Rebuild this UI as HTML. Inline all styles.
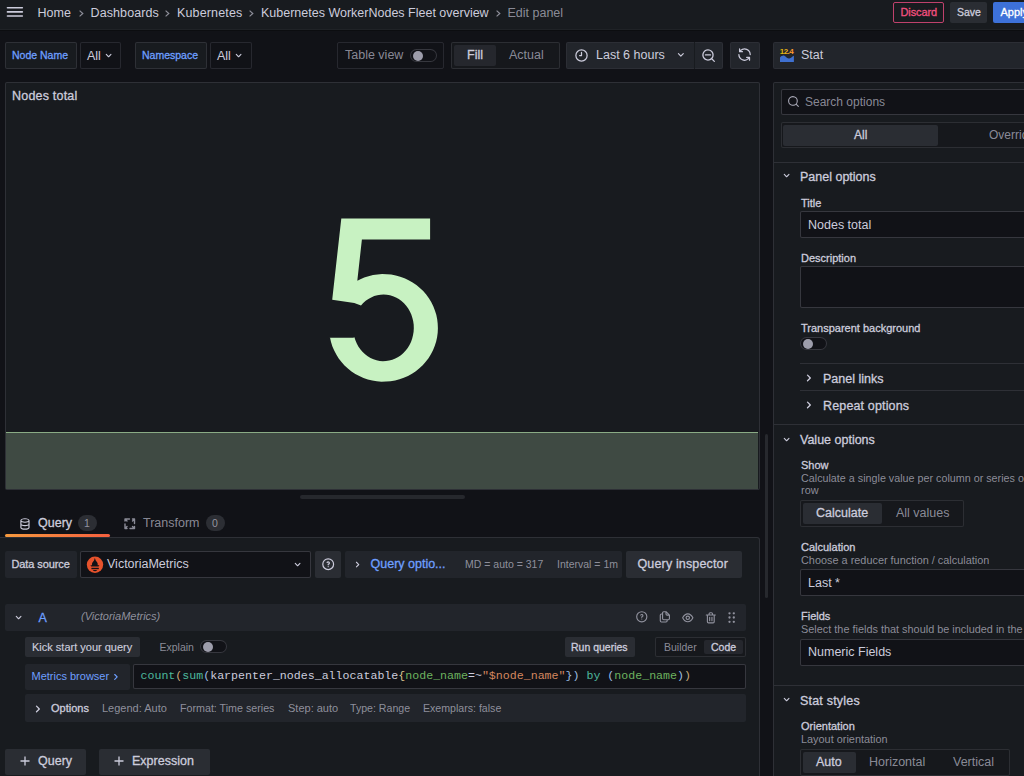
<!DOCTYPE html>
<html><head><meta charset="utf-8">
<style>
*{box-sizing:border-box;margin:0;padding:0}
html,body{width:1024px;height:776px;overflow:hidden;background:#111217;font-family:"Liberation Sans",sans-serif;color:#ccccdc}
.a{position:absolute}
.t{position:absolute;white-space:nowrap;line-height:1}
.bw{border:1px solid rgba(204,204,220,0.12)}
.bg2{border:1px solid rgba(204,204,220,0.16)}
.bm{border:1px solid rgba(204,204,220,0.2)}
.r2{border-radius:2px}
.sec{color:rgba(204,204,220,0.65)}
.link{color:#6e9fff}
.m{-webkit-text-stroke:0.3px currentColor}
.btn2{background:#2a2d33;border-radius:2px}
svg{position:absolute;overflow:visible}
</style></head><body>

<!-- TOP BAR -->
<div class="a" style="left:0;top:0;width:1024px;height:30px;background:#181b1f;border-bottom:1px solid rgba(204,204,220,0.045)"></div>
<svg style="left:5.05px;top:2.3px" width="19.80" height="19.80" viewBox="0 0 24 24"><path d="M3,8H21a1,1,0,0,0,0-2H3A1,1,0,0,0,3,8Zm18,8H3a1,1,0,0,0,0,2H21a1,1,0,0,0,0-2Zm0-5H3a1,1,0,0,0,0,2H21a1,1,0,0,0,0-2Z" fill="#ccccdc"/></svg>
<div class="t" style="left:37.5px;top:6.5px;font-size:12.5px">Home</div><svg style="left:79px;top:10px" width="5" height="7"><path d="M0.6 0.6 L3.8 3.5 L0.6 6.4" stroke="rgba(204,204,220,0.65)" stroke-width="1.2" fill="none"/></svg><div class="t" style="left:90.5px;top:6.5px;font-size:12.5px;letter-spacing:0.1px">Dashboards</div><svg style="left:165px;top:10px" width="5" height="7"><path d="M0.6 0.6 L3.8 3.5 L0.6 6.4" stroke="rgba(204,204,220,0.65)" stroke-width="1.2" fill="none"/></svg><div class="t" style="left:177px;top:6.5px;font-size:12.5px;letter-spacing:0.15px">Kubernetes</div><svg style="left:249px;top:10px" width="5" height="7"><path d="M0.6 0.6 L3.8 3.5 L0.6 6.4" stroke="rgba(204,204,220,0.65)" stroke-width="1.2" fill="none"/></svg><div class="t" style="left:261px;top:6.5px;font-size:12.5px">Kubernetes WorkerNodes Fleet overview</div><svg style="left:495.5px;top:10px" width="5" height="7"><path d="M0.6 0.6 L3.8 3.5 L0.6 6.4" stroke="rgba(204,204,220,0.65)" stroke-width="1.2" fill="none"/></svg><div class="t sec" style="left:507.5px;top:6.5px;font-size:12.5px">Edit panel</div>

<div class="a r2" style="left:893px;top:2px;width:51px;height:21px;border:1px solid #bf416c"></div>
<div class="t m" style="left:900.5px;top:7px;font-size:11px;color:#f2507f;letter-spacing:-0.1px">Discard</div>
<div class="a btn2" style="left:950px;top:2px;width:37px;height:21px"></div>
<div class="t m" style="left:957px;top:7px;font-size:10.5px">Save</div>
<div class="a r2" style="left:993px;top:2px;width:40px;height:21px;background:#3d71d9"></div>
<div class="t m" style="left:1000.5px;top:7px;font-size:11px;color:#fff">Apply</div>

<div class="a" style="left:0;top:30px;width:1024px;height:1px;background:#0c0d10"></div>
<!-- VARIABLES ROW -->
<div class="a bw r2" style="left:5px;top:42px;width:72px;height:27px;background:#181b1f"></div>
<div class="t link m" style="left:12px;top:50px;font-size:10.5px">Node Name</div>
<div class="a bw r2" style="left:80px;top:42px;width:41px;height:27px;background:#111217"></div>
<div class="t" style="left:87px;top:50px;font-size:12.5px">All</div>
<svg style="left:101.65px;top:48.5px" width="13.20" height="13.20" viewBox="0 0 24 24"><path d="M17,9.17a1,1,0,0,0-1.41,0L12,12.71,8.46,9.17a1,1,0,0,0-1.41,0,1,1,0,0,0,0,1.42l4.24,4.24a1,1,0,0,0,1.42,0L17,10.59A1,1,0,0,0,17,9.17Z" fill="#ccccdc"/></svg>

<div class="a bw r2" style="left:135px;top:42px;width:72px;height:27px;background:#181b1f"></div>
<div class="t link m" style="left:142px;top:50px;font-size:10.5px">Namespace</div>
<div class="a bw r2" style="left:210px;top:42px;width:42px;height:27px;background:#111217"></div>
<div class="t" style="left:217px;top:50px;font-size:12.5px">All</div>
<svg style="left:231.85px;top:48.5px" width="13.20" height="13.20" viewBox="0 0 24 24"><path d="M17,9.17a1,1,0,0,0-1.41,0L12,12.71,8.46,9.17a1,1,0,0,0-1.41,0,1,1,0,0,0,0,1.42l4.24,4.24a1,1,0,0,0,1.42,0L17,10.59A1,1,0,0,0,17,9.17Z" fill="#ccccdc"/></svg>

<!-- Table view -->
<div class="a bw r2" style="left:337px;top:42px;width:107px;height:27px"></div>
<div class="t sec" style="left:345px;top:49px;font-size:12.5px">Table view</div>
<div class="a" style="left:410px;top:49px;width:27px;height:13px;border-radius:7px;border:1px solid rgba(204,204,220,0.2);background:#111217"></div>
<div class="a" style="left:413px;top:50.5px;width:10px;height:10px;border-radius:5px;background:#9d9dab"></div>

<!-- Fill/Actual -->
<div class="a bw r2" style="left:451px;top:42px;width:109px;height:27px;background:#16181c"></div>
<div class="a r2" style="left:454px;top:45px;width:42px;height:21px;background:#25272d"></div>
<div class="t m" style="left:467px;top:49px;font-size:12.5px">Fill</div>
<div class="t sec" style="left:509px;top:49px;font-size:12.5px">Actual</div>

<!-- Time picker -->
<div class="a r2" style="left:566px;top:42px;width:157px;height:27px;background:#22252b;border:1px solid rgba(204,204,220,0.06)"></div>
<div class="a" style="left:694px;top:42px;width:1px;height:27px;background:#181b1f"></div>
<svg style="left:573.7px;top:47.5px" width="15.00" height="15.00" viewBox="0 0 24 24"><path d="M12,2A10,10,0,1,0,22,12,10,10,0,0,0,12,2Zm0,18a8,8,0,1,1,8-8A8,8,0,0,1,12,20Zm0-14a1,1,0,0,0-1,1v4H9a1,1,0,0,0,0,2h3a1,1,0,0,0,1-1V7A1,1,0,0,0,12,6Z" fill="#ccccdc"/></svg>
<div class="t" style="left:596px;top:49px;font-size:12.5px">Last 6 hours</div>
<svg style="left:673.6px;top:48.2px" width="13.68" height="13.68" viewBox="0 0 24 24"><path d="M17,9.17a1,1,0,0,0-1.41,0L12,12.71,8.46,9.17a1,1,0,0,0-1.41,0,1,1,0,0,0,0,1.42l4.24,4.24a1,1,0,0,0,1.42,0L17,10.59A1,1,0,0,0,17,9.17Z" fill="#ccccdc"/></svg>
<svg style="left:700.9px;top:48px" width="15.24" height="15.24" viewBox="0 0 24 24"><path d="M21.71,20.29,18,16.61A9,9,0,1,0,16.61,18l3.68,3.68a1,1,0,0,0,1.42,0A1,1,0,0,0,21.71,20.29ZM11,18a7,7,0,1,1,7-7A7,7,0,0,1,11,18Zm4-8H7a1,1,0,0,0,0,2h8a1,1,0,0,0,0-2Z" fill="#ccccdc"/></svg>
<div class="a r2" style="left:730px;top:42px;width:30px;height:27px;background:#22252b;border:1px solid rgba(204,204,220,0.06)"></div>
<svg style="left:737.4px;top:47.4px" width="15.12" height="15.12" viewBox="0 0 24 24"><path d="M19.91,15.51H15.38a1,1,0,0,0,0,2h2.4A8,8,0,0,1,4,12a1,1,0,0,0-2,0,10,10,0,0,0,16.88,7.23V21a1,1,0,0,0,2,0V16.5A1,1,0,0,0,19.91,15.51ZM12,2A10,10,0,0,0,5.12,4.77V3a1,1,0,0,0-2,0V7.5a1,1,0,0,0,1,1h4.5a1,1,0,0,0,0-2H6.22A8,8,0,0,1,20,12a1,1,0,0,0,2,0A10,10,0,0,0,12,2Z" fill="#ccccdc"/></svg>

<!-- Stat picker -->
<div class="a r2" style="left:773px;top:42px;width:260px;height:27px;background:#22252b;border:1px solid rgba(204,204,220,0.06)"></div>
<svg style="left:780px;top:48px" width="15" height="15"><text x="-0.3" y="6.2" font-family="Liberation Sans" font-weight="700" font-size="8" letter-spacing="-0.5"><tspan fill="#e0b60c">1</tspan><tspan fill="#eab219">2</tspan><tspan fill="#f5a526">.</tspan><tspan fill="#ff9a2e">4</tspan></text><path d="M0 9.6 C1.5 7.8 3.3 7.2 4.7 7.9 C6.5 8.8 7.6 11 9.4 10.5 C11 10 12.5 8.4 13.9 7.8 V13.9 H0 Z" fill="#3f70d0"/></svg>
<div class="t" style="left:801px;top:49px;font-size:12.5px">Stat</div>

<!-- PANEL -->
<div class="a bw" style="left:5px;top:82px;width:755px;height:408px;background:#181b1f;border-radius:2px"></div>
<div class="t m" style="left:12px;top:89.5px;font-size:12.5px;letter-spacing:0.2px">Nodes total</div>
<svg style="left:0;top:0" width="1024" height="776"><path d="M341.3 218.6 L430.1 218.6 L430.1 239.5 L361.9 239.5 L357.0 283.4 L355.9 281.5 L359.9 279.4 L364.2 277.6 L368.5 276.2 L373.0 275.1 L377.5 274.4 L382.1 274.1 L386.7 274.2 L391.2 274.6 L395.8 275.5 L400.2 276.7 L404.5 278.3 L408.6 280.2 L412.6 282.5 L416.4 285.0 L419.9 287.9 L423.2 291.1 L426.2 294.6 L428.9 298.2 L431.2 302.1 L433.3 306.2 L434.9 310.4 L436.3 314.8 L437.2 319.2 L437.7 323.7 L437.9 328.3 L437.7 332.8 L437.1 337.3 L436.1 341.7 L434.7 346.0 L433.0 350.3 L430.9 354.3 L428.5 358.2 L425.7 361.8 L422.7 365.2 L419.4 368.3 L415.8 371.2 L412.0 373.7 L408.0 375.9 L403.8 377.8 L399.5 379.3 L395.1 380.5 L390.5 381.2 L386.0 381.6 L381.4 381.7 L376.8 381.3 L372.3 380.5 L367.8 379.4 L363.5 377.9 L359.3 376.1 L355.3 373.9 L351.5 371.4 L347.9 368.6 L344.5 365.4 L341.5 362.1 L338.7 358.4 L336.3 354.6 L334.2 350.6 L332.4 346.4 L331.0 342.0 L330.0 337.6 L329.7 337.7 L353.2 337.7 L354.4 337.3 L355.5 340.6 L356.9 343.7 L358.5 346.7 L360.5 349.5 L362.7 352.1 L365.1 354.3 L367.7 356.3 L370.5 358.0 L373.5 359.3 L376.5 360.3 L379.7 360.9 L382.9 361.2 L386.0 361.1 L389.2 360.6 L392.3 359.8 L395.3 358.6 L398.2 357.0 L400.9 355.2 L403.4 353.0 L405.7 350.6 L407.7 347.9 L409.5 345.0 L411.0 341.9 L412.2 338.6 L413.0 335.2 L413.6 331.8 L413.8 328.3 L413.7 324.8 L413.2 321.3 L412.4 317.9 L411.3 314.6 L409.9 311.5 L408.2 308.5 L406.2 305.8 L404.0 303.3 L401.5 301.0 L398.8 299.1 L396.0 297.5 L393.0 296.2 L390.0 295.3 L386.8 294.7 L383.6 294.5 L380.5 294.7 L377.3 295.2 L374.2 296.1 L371.2 297.4 L368.4 298.9 L365.7 300.8 L363.2 303.1 L361.0 305.5 L354.3 302.9 L332.2 299.7 Z" fill="#c8f2c2"/></svg>
<div class="a" style="left:6px;top:432px;width:752px;height:1px;background:#8aab85"></div>
<div class="a" style="left:6px;top:433px;width:752px;height:56px;background:#3f4a43"></div>

<!-- splitters -->
<div class="a" style="left:300px;top:495px;width:165px;height:4px;border-radius:2px;background:#26282d"></div>
<div class="a" style="left:765px;top:434px;width:3px;height:164px;border-radius:2px;background:#27292e"></div>

<!-- TABS -->
<svg style="left:17.7px;top:516.5px" width="13.92" height="13.92" viewBox="0 0 24 24"><path d="M12,2C7.58,2,4,3.79,4,6V18c0,2.21,3.58,4,8,4s8-1.79,8-4V6C20,3.79,16.42,2,12,2Zm6,16c0,1-2.29,2-6,2s-6-1-6-2V14.770A13.76,13.76,0,0,0,12,16a13.76,13.76,0,0,0,6-1.23Zm0-6c0,1-2.29,2-6,2s-6-1-6-2V8.77A13.76,13.76,0,0,0,12,10a13.76,13.76,0,0,0,6-1.23ZM12,8C8.29,8,6,7,6,6s2.29-2,6-2,6,1,6,2S15.71,8,12,8Z" fill="#ccccdc"/></svg>
<div class="t m" style="left:38px;top:517px;font-size:12.5px">Query</div>
<div class="a" style="left:78px;top:515px;width:19px;height:16px;border-radius:8px;background:#2c2e34"></div>
<div class="t sec" style="left:84px;top:518px;font-size:10.5px">1</div>
<div class="a" style="left:5px;top:534px;width:105px;height:3px;border-radius:2px;background:linear-gradient(90deg,#f69a3f,#f55f3e)"></div>
<svg style="left:124px;top:517.5px" width="12" height="12"><g stroke="rgba(204,204,220,0.65)" stroke-width="1.4" fill="none" stroke-linecap="round"><path d="M1 1 L3 3 M1 1 H5.5 M1 1 V3"/><path d="M10.5 1 L8.5 3 M10.5 1 V5.5 M10.5 1 H8.5"/><path d="M10.5 10.5 L8.5 8.5 M10.5 10.5 H6 M10.5 10.5 V8.5"/><path d="M1 10.5 L3 8.5 M1 10.5 V6 M1 10.5 H3"/></g></svg>
<div class="t sec" style="left:143px;top:517px;font-size:12.5px">Transform</div>
<div class="a" style="left:206px;top:515px;width:19px;height:16px;border-radius:8px;background:#2c2e34"></div>
<div class="t sec" style="left:212px;top:518px;font-size:10.5px">0</div>

<!-- QUERY EDITOR CONTAINER -->
<div class="a bw" style="left:-10px;top:537px;width:770px;height:260px;background:#181b1f;border-radius:3px"></div>
<div class="a r2" style="left:5px;top:551px;width:72px;height:27px;background:#22252b"></div>
<div class="t m" style="left:11.5px;top:559px;font-size:11px;letter-spacing:-0.1px">Data source</div>
<div class="a bm r2" style="left:80px;top:551px;width:231px;height:27px;background:#111217"></div>
<svg style="left:86px;top:556px" width="18" height="18"><circle cx="9" cy="8.7" r="8.2" fill="#e6522c"/><path d="M8.8 1.9 C9.6 3.4 9.3 4.2 10.3 5.2 C11.6 6.5 12 7.6 11.6 9.2 L13.4 9.2 L12.6 10.6 H5.2 L4.4 9.2 L6.1 9.2 C5.7 7.6 6.3 6.5 7.4 5.3 C8.2 4.4 8.3 3.4 8.8 1.9 Z" fill="#111217"/><rect x="5.4" y="11.8" width="7.4" height="1.4" fill="#111217"/><path d="M6.7 14 H11.3 Q9 16.4 6.7 14Z" fill="#111217"/></svg>
<div class="t" style="left:107px;top:558px;font-size:12.5px">VictoriaMetrics</div>
<svg style="left:291.40px;top:558.32px" width="13.20" height="13.20" viewBox="0 0 24 24"><path d="M17,9.17a1,1,0,0,0-1.41,0L12,12.71,8.46,9.17a1,1,0,0,0-1.41,0,1,1,0,0,0,0,1.42l4.24,4.24a1,1,0,0,0,1.42,0L17,10.59A1,1,0,0,0,17,9.17Z" fill="#ccccdc"/></svg>
<div class="a btn2" style="left:315px;top:551px;width:26px;height:27px"></div>
<svg style="left:320.7px;top:557.3px" width="14.40" height="14.40" viewBox="0 0 24 24"><path d="M11.29,15.29a1.58,1.58,0,0,0-.12.15.76.76,0,0,0-.09.18.64.64,0,0,0-.06.18,1.36,1.36,0,0,0,0,.2.84.84,0,0,0,.08.38.9.9,0,0,0,.54.54.94.94,0,0,0,.76,0,.9.9,0,0,0,.54-.54A1,1,0,0,0,13,16a1,1,0,0,0-.29-.71A1,1,0,0,0,11.29,15.29ZM12,2A10,10,0,1,0,22,12,10,10,0,0,0,12,2Zm0,18a8,8,0,1,1,8-8A8,8,0,0,1,12,20ZM12,7A3,3,0,0,0,9.4,8.5a1,1,0,1,0,1.73,1A1,1,0,0,1,12,9a1,1,0,0,1,0,2,1,1,0,0,0-1,1v1a1,1,0,0,0,2,0v-.18A3,3,0,0,0,12,7Z" fill="#ccccdc"/></svg>
<div class="a r2" style="left:345px;top:551px;width:277px;height:27px;background:#22252b"></div>
<svg style="left:351.2px;top:557.9px" width="13.2" height="13.2" viewBox="0 0 24 24"><path d="M14.83,11.29,10.59,7.05a1,1,0,0,0-1.42,0,1,1,0,0,0,0,1.41L12.71,12,9.17,15.54a1,1,0,0,0,0,1.41,1,1,0,0,0,.71.3.93.93,0,0,0,.71-.3l4.24-4.24A1,1,0,0,0,14.83,11.29Z" fill="#ccccdc"/></svg>
<div class="t link m" style="left:370.5px;top:558px;font-size:12.5px">Query optio...</div>
<div class="t sec" style="left:465px;top:559px;font-size:10.5px">MD = auto = 317</div>
<div class="t sec" style="left:557px;top:559px;font-size:10.5px">Interval = 1m</div>
<div class="a btn2" style="left:626px;top:551px;width:116px;height:27px"></div>
<div class="t m" style="left:637.5px;top:558px;font-size:12.5px;letter-spacing:0.15px">Query inspector</div>

<!-- Query row A -->
<div class="a r2" style="left:5px;top:604px;width:741px;height:27px;background:#22252b"></div>
<svg style="left:11.7px;top:610.8px" width="13.20" height="13.20" viewBox="0 0 24 24"><path d="M17,9.17a1,1,0,0,0-1.41,0L12,12.71,8.46,9.17a1,1,0,0,0-1.41,0,1,1,0,0,0,0,1.42l4.24,4.24a1,1,0,0,0,1.42,0L17,10.59A1,1,0,0,0,17,9.17Z" fill="#ccccdc"/></svg>
<div class="t link m" style="left:38.5px;top:611.5px;font-size:12.5px">A</div>
<div class="t sec" style="left:81px;top:611px;font-size:11px;font-style:italic">(VictoriaMetrics)</div>

<svg style="left:634.9px;top:610.3px" width="13.56" height="13.56" viewBox="0 0 24 24"><path d="M11.29,15.29a1.58,1.58,0,0,0-.12.15.76.76,0,0,0-.09.18.64.64,0,0,0-.06.18,1.36,1.36,0,0,0,0,.2.84.84,0,0,0,.08.38.9.9,0,0,0,.54.54.94.94,0,0,0,.76,0,.9.9,0,0,0,.54-.54A1,1,0,0,0,13,16a1,1,0,0,0-.29-.71A1,1,0,0,0,11.29,15.29ZM12,2A10,10,0,1,0,22,12,10,10,0,0,0,12,2Zm0,18a8,8,0,1,1,8-8A8,8,0,0,1,12,20ZM12,7A3,3,0,0,0,9.4,8.5a1,1,0,1,0,1.73,1A1,1,0,0,1,12,9a1,1,0,0,1,0,2,1,1,0,0,0-1,1v1a1,1,0,0,0,2,0v-.18A3,3,0,0,0,12,7Z" fill="rgba(204,204,220,0.65)"/></svg>
<svg style="left:658.2px;top:610.3px" width="13.73" height="13.73" viewBox="0 0 24 24"><path d="M21,8.94a1.31,1.31,0,0,0-.06-.27l0-.09a1.07,1.07,0,0,0-.19-.28h0l-6-6h0a1.070,1.07,0,0,0-.28-.19.32.32,0,0,0-.09,0A.88.88,0,0,0,14.05,2H10A3,3,0,0,0,7,5V6H6A3,3,0,0,0,3,9V19a3,3,0,0,0,3,3h8a3,3,0,0,0,3-3V18h1a3,3,0,0,0,3-3V9S21,9,21,8.94ZM15,5.41,17.590,8H16a1,1,0,0,1-1-1ZM15,19a1,1,0,0,1-1,1H6a1,1,0,0,1-1-1V9A1,1,0,0,1,6,8H7v7a3,3,0,0,0,3,3h5Zm4-4a1,1,0,0,1-1,1H10a1,1,0,0,1-1-1V5a1,1,0,0,1,1-1h3V7a3,3,0,0,0,3,3h3Z" fill="rgba(204,204,220,0.65)"/></svg>
<svg style="left:681px;top:610.5px" width="13.56" height="13.56" viewBox="0 0 24 24"><path d="M21.92,11.6C19.9,6.91,16.1,4,12,4S4.1,6.91,2.08,11.6a1,1,0,0,0,0,.8C4.1,17.09,7.9,20,12,20s7.9-2.91,9.92-7.6A1,1,0,0,0,21.92,11.6ZM12,18c-3.17,0-6.170-2.29-7.9-6C5.83,8.29,8.83,6,12,6s6.17,2.29,7.9,6C18.17,15.71,15.17,18,12,18ZM12,8a4,4,0,1,0,4,4A4,4,0,0,0,12,8Zm0,6a2,2,0,1,1,2-2A2,2,0,0,1,12,14Z" fill="rgba(204,204,220,0.65)"/></svg>
<svg style="left:704.1px;top:610.5px" width="13.61" height="13.61" viewBox="0 0 24 24"><path d="M10,18a1,1,0,0,0,1-1V11a1,1,0,0,0-2,0v6A1,1,0,0,0,10,18ZM20,6H16V5a3,3,0,0,0-3-3H11A3,3,0,0,0,8,5V6H4A1,1,0,0,0,4,8H5V19a3,3,0,0,0,3,3h8a3,3,0,0,0,3-3V8h1a1,1,0,0,0,0-2ZM10,5a1,1,0,0,1,1-1h2a1,1,0,0,1,1,1V6H10Zm7,14a1,1,0,0,1-1,1H8a1,1,0,0,1-1-1V8H17Zm-3-1a1,1,0,0,0,1-1V11a1,1,0,0,0-2,0v6A1,1,0,0,0,14,18Z" fill="rgba(204,204,220,0.65)"/></svg>
<svg style="left:728px;top:612px" width="7" height="11"><g fill="rgba(204,204,220,0.65)"><circle cx="1.5" cy="1.3" r="1.15"/><circle cx="5.8" cy="1.3" r="1.15"/><circle cx="1.5" cy="5.5" r="1.15"/><circle cx="5.8" cy="5.5" r="1.15"/><circle cx="1.5" cy="9.8" r="1.15"/><circle cx="5.8" cy="9.8" r="1.15"/></g></svg>
<div class="a btn2" style="left:25px;top:637px;width:115px;height:20px"></div>
<div class="t" style="left:32px;top:642px;font-size:11px;-webkit-text-stroke:0.15px currentColor">Kick start your query</div>
<div class="t sec" style="left:159.5px;top:641.5px;font-size:10.5px">Explain</div>
<div class="a" style="left:200px;top:640px;width:27px;height:13px;border-radius:7px;border:1px solid rgba(204,204,220,0.2);background:#111217"></div>
<div class="a" style="left:203px;top:641.5px;width:10px;height:10px;border-radius:5px;background:#9d9dab"></div>
<div class="a btn2" style="left:565px;top:637px;width:70px;height:20px"></div>
<div class="t m" style="left:571px;top:642px;font-size:10.5px">Run queries</div>
<div class="a bw r2" style="left:655px;top:637px;width:91px;height:20px;background:#16181c"></div>
<div class="a r2" style="left:704px;top:640px;width:39px;height:14px;background:#25272d"></div>
<div class="t sec" style="left:664px;top:642px;font-size:10.5px">Builder</div>
<div class="t m" style="left:711px;top:642px;font-size:10.5px">Code</div>

<div class="a r2" style="left:25px;top:664px;width:105px;height:26px;background:#22252b"></div>
<div class="t link" style="left:31.5px;top:671px;font-size:11px">Metrics browser</div><svg style="left:109.24px;top:669.74px" width="13.92" height="13.92" viewBox="0 0 24 24"><path d="M14.83,11.29,10.59,7.05a1,1,0,0,0-1.42,0,1,1,0,0,0,0,1.41L12.71,12,9.17,15.54a1,1,0,0,0,0,1.41,1,1,0,0,0,.71.3.93.93,0,0,0,.71-.3l4.24-4.24A1,1,0,0,0,14.83,11.29Z" fill="#6e9fff"/></svg>
<div class="a bm r2" style="left:133px;top:664px;width:613px;height:25px;background:#111217"></div>
<div class="t" style="left:140.5px;top:669.5px;font-family:'Liberation Mono';font-size:11.62px;color:#ccccdc"><span style="color:#4db89c">count</span><span style="color:#c9a97a">(</span><span style="color:#4db89c">sum</span><span style="color:#9fbfe0">(</span>karpenter_nodes_allocatable<span style="color:#d9c48e">{</span><span style="color:#6db35f">node_name</span>=~<span style="color:#d4875f">"$node_name"</span><span style="color:#9fbfe0">})</span> <span style="color:#4db89c">by</span> <span style="color:#9fbfe0">(</span><span style="color:#6db35f">node_name</span><span style="color:#9fbfe0">)</span><span style="color:#c9a97a">)</span></div>

<div class="a r2" style="left:25px;top:694px;width:721px;height:28px;background:#22252b"></div>
<svg style="left:29.83px;top:700.58px" width="15.84" height="15.84" viewBox="0 0 24 24"><path d="M14.83,11.29,10.59,7.05a1,1,0,0,0-1.42,0,1,1,0,0,0,0,1.41L12.71,12,9.17,15.54a1,1,0,0,0,0,1.41,1,1,0,0,0,.71.3.93.93,0,0,0,.71-.3l4.24-4.24A1,1,0,0,0,14.83,11.29Z" fill="#ccccdc"/></svg>
<div class="t m" style="left:51px;top:702.5px;font-size:11px">Options</div>
<div class="t sec" style="left:102px;top:703px;font-size:11px">Legend: Auto</div>
<div class="t sec" style="left:180px;top:703px;font-size:10.7px">Format: Time series</div>
<div class="t sec" style="left:288px;top:703px;font-size:11px">Step: auto</div>
<div class="t sec" style="left:350px;top:703px;font-size:10.6px">Type: Range</div>
<div class="t sec" style="left:423px;top:703px;font-size:10.6px">Exemplars: false</div>

<div class="a btn2" style="left:5px;top:749px;width:81px;height:26px"></div>
<svg style="left:20px;top:756px" width="10" height="10"><path d="M5 0.5 V9.5 M0.5 5 H9.5" stroke="#ccccdc" stroke-width="1.3"/></svg><div class="t m" style="left:38px;top:755px;font-size:12.5px">Query</div>
<div class="a btn2" style="left:99px;top:749px;width:111px;height:26px"></div>
<svg style="left:114px;top:756px" width="10" height="10"><path d="M5 0.5 V9.5 M0.5 5 H9.5" stroke="#ccccdc" stroke-width="1.3"/></svg><div class="t m" style="left:132px;top:755px;font-size:12.5px">Expression</div>

<!-- OPTIONS PANE -->
<div class="a bw" style="left:773px;top:82px;width:260px;height:700px;background:#181b1f;border-radius:2px"></div>
<div class="a bm r2" style="left:781px;top:89px;width:260px;height:26px;background:#111217"></div>
<svg style="left:787.2px;top:95px" width="12.96" height="12.96" viewBox="0 0 24 24"><path d="M21.71,20.29,18,16.61A9,9,0,1,0,16.61,18l3.68,3.68a1,1,0,0,0,1.42,0A1,1,0,0,0,21.71,20.29ZM11,18a7,7,0,1,1,7-7A7,7,0,0,1,11,18Z" fill="rgba(204,204,220,0.8)"/></svg>
<div class="t sec" style="left:805px;top:96px;font-size:12px">Search options</div>
<div class="a bw r2" style="left:781px;top:122px;width:260px;height:26px;background:#16181c"></div>
<div class="a r2" style="left:783px;top:125px;width:155px;height:21px;background:#2a2d33"></div>
<div class="t m" style="left:854px;top:129px;font-size:12px">All</div>
<div class="t sec" style="left:989px;top:129px;font-size:12px">Overrides</div>
<div class="a" style="left:774px;top:162px;width:260px;height:1px;background:rgba(204,204,220,0.12)"></div>

<svg style="left:779.9px;top:169.3px" width="13.20" height="13.20" viewBox="0 0 24 24"><path d="M17,9.17a1,1,0,0,0-1.41,0L12,12.71,8.46,9.17a1,1,0,0,0-1.41,0,1,1,0,0,0,0,1.42l4.24,4.24a1,1,0,0,0,1.42,0L17,10.59A1,1,0,0,0,17,9.17Z" fill="#ccccdc"/></svg>
<div class="t m" style="left:800px;top:171px;font-size:12.5px">Panel options</div>
<div class="t m" style="left:801px;top:198px;font-size:11px">Title</div>
<div class="a bm r2" style="left:800px;top:211px;width:240px;height:27px;background:#111217"></div>
<div class="t" style="left:808px;top:219px;font-size:12.5px">Nodes total</div>
<div class="t m" style="left:801px;top:253px;font-size:11px">Description</div>
<div class="a bm r2" style="left:800px;top:266px;width:240px;height:42px;background:#111217"></div>
<div class="t m" style="left:801px;top:323px;font-size:11px">Transparent background</div>
<div class="a" style="left:800px;top:337px;width:27px;height:13px;border-radius:7px;border:1px solid rgba(204,204,220,0.2);background:#111217"></div>
<div class="a" style="left:803px;top:338.5px;width:10px;height:10px;border-radius:5px;background:#9d9dab"></div>

<div class="a" style="left:800px;top:363px;width:240px;height:1px;background:rgba(204,204,220,0.12)"></div>
<svg style="left:801.1px;top:369.6px" width="15.84" height="15.84" viewBox="0 0 24 24"><path d="M14.83,11.29,10.59,7.05a1,1,0,0,0-1.42,0,1,1,0,0,0,0,1.41L12.71,12,9.17,15.54a1,1,0,0,0,0,1.41,1,1,0,0,0,.71.3.93.93,0,0,0,.71-.3l4.24-4.24A1,1,0,0,0,14.83,11.29Z" fill="#ccccdc"/></svg>
<div class="t m" style="left:823px;top:373px;font-size:12.5px">Panel links</div>
<div class="a" style="left:800px;top:390px;width:240px;height:1px;background:rgba(204,204,220,0.12)"></div>
<svg style="left:801.1px;top:396.6px" width="15.84" height="15.84" viewBox="0 0 24 24"><path d="M14.83,11.29,10.59,7.05a1,1,0,0,0-1.42,0,1,1,0,0,0,0,1.41L12.71,12,9.17,15.54a1,1,0,0,0,0,1.41,1,1,0,0,0,.71.3.93.93,0,0,0,.71-.3l4.24-4.24A1,1,0,0,0,14.83,11.29Z" fill="#ccccdc"/></svg>
<div class="t m" style="left:823px;top:400px;font-size:12.5px;letter-spacing:0.15px">Repeat options</div>
<div class="a" style="left:774px;top:424px;width:260px;height:1px;background:rgba(204,204,220,0.12)"></div>

<svg style="left:779.9px;top:432.6px" width="13.20" height="13.20" viewBox="0 0 24 24"><path d="M17,9.17a1,1,0,0,0-1.41,0L12,12.71,8.46,9.17a1,1,0,0,0-1.41,0,1,1,0,0,0,0,1.42l4.24,4.24a1,1,0,0,0,1.42,0L17,10.59A1,1,0,0,0,17,9.17Z" fill="#ccccdc"/></svg>
<div class="t m" style="left:800px;top:434px;font-size:12.5px">Value options</div>
<div class="t m" style="left:801px;top:460px;font-size:11px">Show</div>
<div class="t sec" style="left:801px;top:473px;font-size:10.75px">Calculate a single value per column or series or</div>
<div class="t sec" style="left:801px;top:485px;font-size:10.9px">row</div>
<div class="a bw r2" style="left:800px;top:500px;width:164px;height:27px;background:#16181c"></div>
<div class="a r2" style="left:803px;top:503px;width:79px;height:21px;background:#2a2d33"></div>
<div class="t m" style="left:816px;top:507px;font-size:12.5px">Calculate</div>
<div class="t sec" style="left:896px;top:507px;font-size:12.5px">All values</div>

<div class="t m" style="left:801px;top:542px;font-size:11px">Calculation</div>
<div class="t sec" style="left:801px;top:555px;font-size:10.9px">Choose a reducer function / calculation</div>
<div class="a bm r2" style="left:800px;top:569px;width:240px;height:27px;background:#111217"></div>
<div class="t" style="left:808px;top:577px;font-size:12.5px">Last *</div>
<div class="t m" style="left:801px;top:611px;font-size:11px">Fields</div>
<div class="t sec" style="left:801px;top:624px;font-size:10.9px">Select the fields that should be included in the panel</div>
<div class="a bm r2" style="left:800px;top:639px;width:240px;height:27px;background:#111217"></div>
<div class="t" style="left:808px;top:646px;font-size:12.5px">Numeric Fields</div>
<div class="a" style="left:774px;top:685px;width:260px;height:1px;background:rgba(204,204,220,0.12)"></div>

<svg style="left:779.9px;top:692.8px" width="13.20" height="13.20" viewBox="0 0 24 24"><path d="M17,9.17a1,1,0,0,0-1.41,0L12,12.71,8.46,9.17a1,1,0,0,0-1.41,0,1,1,0,0,0,0,1.42l4.24,4.24a1,1,0,0,0,1.42,0L17,10.59A1,1,0,0,0,17,9.17Z" fill="#ccccdc"/></svg>
<div class="t m" style="left:800px;top:695px;font-size:12.5px;letter-spacing:0.2px">Stat styles</div>
<div class="t m" style="left:801px;top:721px;font-size:11px">Orientation</div>
<div class="t sec" style="left:801px;top:734px;font-size:10.9px">Layout orientation</div>
<div class="a bw r2" style="left:800px;top:749px;width:210px;height:27px;background:#16181c"></div>
<div class="a r2" style="left:803px;top:752px;width:53px;height:21px;background:#2a2d33"></div>
<div class="t m" style="left:816px;top:756px;font-size:12.5px">Auto</div>
<div class="t sec" style="left:869px;top:756px;font-size:12.5px">Horizontal</div>
<div class="t sec" style="left:953px;top:756px;font-size:12.5px">Vertical</div>

</body></html>
